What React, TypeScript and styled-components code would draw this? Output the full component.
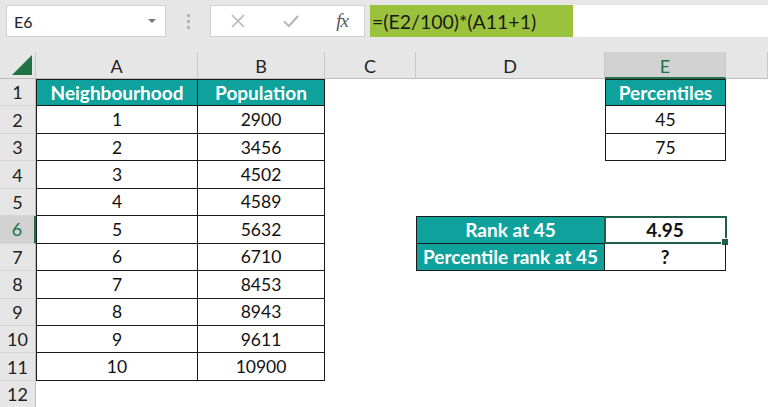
import React from "react";
import styled, { createGlobalStyle, css } from "styled-components";

const GlobalStyle = createGlobalStyle`
  html, body {
    margin: 0;
    padding: 0;
    background: #e6e6e6;
    overflow: hidden;
  }
  * {
    box-sizing: border-box;
  }
`;

const palette = {
  chrome: "#e6e6e6",
  chromeDark: "#d2d2d2",
  teal: "#0fa19b",
  green: "#217346",
  select: "#1f5e4b",
  lime: "#9bc23c",
  line: "#c8c8c8",
  ink: "#111",
};

const Page = styled.div`
  width: 768px;
  height: 407px;
  overflow: hidden;
  background: ${palette.chrome};
  font-family: Lato, "Liberation Sans", sans-serif;
`;

const FormulaBar = styled.div`
  display: flex;
  align-items: flex-start;
  height: 52px;
  padding: 5px 0 0 6px;
`;

const NameBox = styled.div`
  width: 160px;
  height: 32px;
  background: #fff;
  border: 1px solid #d0d0d0;
  display: flex;
  align-items: center;
  justify-content: space-between;
  padding: 0 9px 0 7px;
  font-size: 16px;
  color: #222;
`;

const DropArrow = styled.span`
  width: 0;
  height: 0;
  border-left: 4px solid transparent;
  border-right: 4px solid transparent;
  border-top: 4px solid #777;
`;

const Grip = styled.div`
  width: 44px;
  height: 32px;
  display: flex;
  flex-direction: column;
  align-items: center;
  justify-content: center;
  gap: 3px;
  span {
    width: 3px;
    height: 3px;
    background: #b4b4b4;
  }
`;

const FxBox = styled.div`
  width: 155px;
  height: 32px;
  background: #fff;
  border: 1px solid #d0d0d0;
  display: flex;
  align-items: center;
  justify-content: space-between;
  padding: 0 16px 0 19px;
`;

const FxLabel = styled.span`
  font-family: "Liberation Serif", serif;
  font-style: italic;
  font-size: 19px;
  color: #555;
  letter-spacing: -1px;
`;

const FormulaInput = styled.div`
  flex: 1;
  height: 32px;
  margin-left: 5px;
  background: #fff;
  display: flex;
`;

const FormulaText = styled.div`
  width: 203px;
  height: 100%;
  background: ${palette.lime};
  display: flex;
  align-items: center;
  padding-left: 2px;
  font-size: 19.5px;
  color: #1a1a1a;
  white-space: nowrap;
`;

const Sheet = styled.div`
  display: grid;
  grid-template-columns: 36px 162px 127px 91px 189px 121px 1fr;
  grid-template-rows: 27px repeat(12, 27.45px);
  background: #fff;
`;

const Corner = styled.div`
  background: ${palette.chrome};
  border-right: 1px solid ${palette.line};
  border-bottom: 1px solid #bdbdbd;
  position: relative;
  &::after {
    content: "";
    position: absolute;
    right: 3px;
    bottom: 3px;
    width: 0;
    height: 0;
    border-left: 20px solid transparent;
    border-bottom: 20px solid ${palette.green};
  }
`;

const ColHead = styled.div<{ $active?: boolean }>`
  background: ${(p) => (p.$active ? palette.chromeDark : palette.chrome)};
  border-right: 1px solid ${palette.line};
  border-bottom: ${(p) => (p.$active ? `2px solid ${palette.green}` : "1px solid #bdbdbd")};
  display: flex;
  align-items: center;
  justify-content: center;
  padding-top: 2px;
  font-size: 18px;
  color: ${(p) => (p.$active ? palette.green : "#222")};
`;

const RowHead = styled.div<{ $active?: boolean }>`
  background: ${(p) => (p.$active ? palette.chromeDark : palette.chrome)};
  border-right: ${(p) => (p.$active ? `2px solid ${palette.green}` : `1px solid #bdbdbd`)};
  border-bottom: 1px solid #d6d6d6;
  display: flex;
  align-items: center;
  justify-content: center;
  font-size: 18px;
  color: ${(p) => (p.$active ? palette.green : "#222")};
`;

type Kind = "empty" | "head" | "value" | "strong";

const Cell = styled.div<{ $kind: Kind; $top?: boolean; $left?: boolean }>`
  position: relative;
  display: flex;
  align-items: center;
  justify-content: center;
  font-size: 17.5px;
  color: ${palette.ink};
  white-space: nowrap;
  ${(p) =>
    p.$kind !== "empty" &&
    css`
      border-right: 1px solid #1a1a1a;
      border-bottom: 1px solid #1a1a1a;
      ${p.$top && "border-top: 1px solid #1a1a1a;"}
      ${p.$left && "border-left: 1px solid #1a1a1a;"}
    `}
  ${(p) =>
    p.$kind === "head" &&
    css`
      background: ${palette.teal};
      color: #fff;
      font-weight: 700;
      font-size: 19px;
    `}
  ${(p) => p.$kind === "strong" && "font-weight: 700; font-size: 19px;"}
`;

const Selection = styled.div`
  position: absolute;
  inset: -1px -2px -1px -1px;
  border: 2px solid ${palette.select};
  pointer-events: none;
  &::after {
    content: "";
    position: absolute;
    right: -4px;
    bottom: -4px;
    width: 6px;
    height: 6px;
    background: ${palette.select};
    border: 1px solid #fff;
  }
`;

type CellDef = { text?: string; kind: Kind; top?: boolean; left?: boolean; selected?: boolean };

const empty: CellDef = { kind: "empty" };

const populations = [2900, 3456, 4502, 4589, 5632, 6710, 8453, 8943, 9611, 10900];

const buildRows = (): CellDef[][] => {
  const rows: CellDef[][] = [];
  rows.push([
    { text: "Neighbourhood", kind: "head", top: true, left: true },
    { text: "Population", kind: "head", top: true },
    empty,
    empty,
    { text: "Percentiles", kind: "head", top: true, left: true },
    empty,
  ]);
  populations.forEach((pop, i) => {
    const row: CellDef[] = [
      { text: String(i + 1), kind: "value", left: true },
      { text: String(pop), kind: "value" },
      empty,
      empty,
      empty,
      empty,
    ];
    if (i === 0) row[4] = { text: "45", kind: "value", left: true };
    if (i === 1) row[4] = { text: "75", kind: "value", left: true };
    if (i === 4) {
      row[3] = { text: "Rank at 45", kind: "head", top: true, left: true };
      row[4] = { text: "4.95", kind: "strong", top: true, selected: true };
    }
    if (i === 5) {
      row[3] = { text: "Percentile rank at 45", kind: "head", left: true };
      row[4] = { text: "?", kind: "strong" };
    }
    rows.push(row);
  });
  rows.push([empty, empty, empty, empty, empty, empty]);
  return rows;
};

const columns = ["A", "B", "C", "D", "E", ""];

const App: React.FC = () => {
  const rows = buildRows();
  return (
    <Page>
      <GlobalStyle />
      <FormulaBar>
        <NameBox>
          E6
          <DropArrow />
        </NameBox>
        <Grip>
          <span />
          <span />
          <span />
        </Grip>
        <FxBox>
          <svg width="16" height="16" viewBox="0 0 16 16">
            <path d="M2 2 L14 14 M14 2 L2 14" stroke="#b8b8b8" strokeWidth="1.6" fill="none" />
          </svg>
          <svg width="18" height="16" viewBox="0 0 18 16">
            <path d="M2 8.5 L7 13 L16 3" stroke="#b8b8b8" strokeWidth="2.2" fill="none" />
          </svg>
          <FxLabel>fx</FxLabel>
        </FxBox>
        <FormulaInput>
          <FormulaText>=(E2/100)*(A11+1)</FormulaText>
        </FormulaInput>
      </FormulaBar>
      <Sheet>
        <Corner />
        {columns.map((c, i) => (
          <ColHead key={i} $active={c === "E"}>
            {c}
          </ColHead>
        ))}
        {rows.map((row, r) => (
          <React.Fragment key={r}>
            <RowHead $active={r === 5}>{r + 1}</RowHead>
            {row.map((cell, c) => (
              <Cell key={c} $kind={cell.kind} $top={cell.top} $left={cell.left}>
                {cell.text}
                {cell.selected && <Selection />}
              </Cell>
            ))}
          </React.Fragment>
        ))}
      </Sheet>
    </Page>
  );
};

export default App;
